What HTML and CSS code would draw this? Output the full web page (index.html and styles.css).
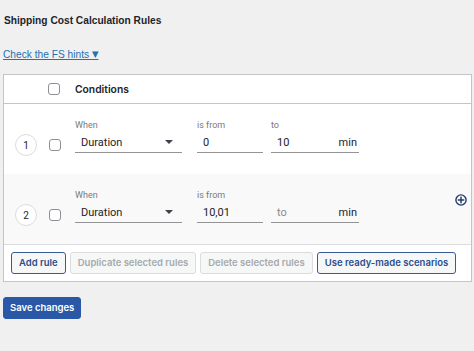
FILE: index.html
```html
<!DOCTYPE html>
<html lang="en">
<head>
<meta charset="utf-8">
<title>Shipping Cost Calculation Rules</title>
<link rel="stylesheet" href="styles.css">
</head>
<body>
<h2 class="title">Shipping Cost Calculation Rules</h2>
<a class="hint-link" href="#">Check the FS hints <span class="tri">▼</span></a>
<div class="rules">
  <div class="rules-head">
    <span class="cb"></span>
    <span class="head-label">Conditions</span>
  </div>
  <div class="rule">
    <span class="num">1</span>
    <span class="cb cb-row"></span>
    <div class="field f-when">
      <div class="f-label">When</div>
      <div class="f-input"><span>Duration</span><span class="caret"></span></div>
    </div>
    <div class="field f-from">
      <div class="f-label">is from</div>
      <div class="f-input"><span>0</span></div>
    </div>
    <div class="field f-to">
      <div class="f-label">to</div>
      <div class="f-input"><span>10</span><span class="suffix">min</span></div>
    </div>
  </div>
  <div class="rule rule-alt">
    <span class="num">2</span>
    <span class="cb cb-row"></span>
    <div class="field f-when">
      <div class="f-label">When</div>
      <div class="f-input"><span>Duration</span><span class="caret"></span></div>
    </div>
    <div class="field f-from">
      <div class="f-label">is from</div>
      <div class="f-input"><span>10,01</span></div>
    </div>
    <div class="field f-to">
      <div class="f-label">&nbsp;</div>
      <div class="f-input"><span class="placeholder">to</span><span class="suffix">min</span></div>
    </div>
    <svg class="plus" viewBox="0 0 12 12" width="12" height="12" aria-hidden="true">
      <circle cx="6" cy="6" r="5.1" fill="none" stroke="currentColor" stroke-width="1.4"/>
      <path d="M6 3.3v5.4M3.3 6h5.4" stroke="currentColor" stroke-width="1.5" stroke-linecap="round"/>
    </svg>
  </div>
  <div class="rules-foot">
    <button class="btn btn-secondary">Add rule</button>
    <button class="btn btn-disabled">Duplicate selected rules</button>
    <button class="btn btn-disabled">Delete selected rules</button>
    <button class="btn btn-secondary">Use ready-made scenarios</button>
  </div>
</div>
<button class="btn btn-primary save">Save changes</button>
</body>
</html>
```

FILE: styles.css
```css
* { box-sizing: border-box; }

body {
  margin: 0;
  padding: 12px 2px 0 3px;
  background: #f0f0f1;
  font-family: Inter, "Liberation Sans", Arial, sans-serif;
  color: #1d2327;
}

.title {
  margin: 0 0 0 1px;
  font-family: "Liberation Sans", Arial, sans-serif;
  font-size: 10.2px;
  line-height: 18px;
  font-weight: 700;
}

.hint-link {
  display: block;
  height: 18px;
  margin-top: 16px;
  font-family: "Liberation Sans", Arial, sans-serif;
  font-size: 10.2px;
  line-height: 18px;
  color: #2271b1;
  text-decoration: underline;
  width: max-content;
}

.tri {
  font-family: "DejaVu Sans", sans-serif;
  font-size: 8.5px;
  line-height: 0;
  vertical-align: 1px;
}

.rules {
  margin-top: 10px;
  border: 1px solid #c3c4c7;
  background: #fff;
}

.rules-head {
  display: flex;
  align-items: center;
  height: 29px;
  border-bottom: 1px solid #c3c4c7;
  padding-left: 44px;
}

.cb {
  display: block;
  width: 12px;
  height: 12px;
  border: 1px solid #8c8f94;
  border-radius: 3px;
  background: #fff;
  flex: none;
}

.head-label {
  margin-left: 15px;
  font-size: 10.3px;
  font-weight: 600;
}

.rule {
  display: flex;
  align-items: flex-start;
  height: 70px;
  padding: 14px 3px 0 11px;
  background: #fff;
}

.rule-alt { background: #f9f9f9; }

.num {
  width: 22px;
  height: 22px;
  margin-top: 16px;
  border: 1px solid #dcdcde;
  border-radius: 50%;
  background: #fff;
  display: flex;
  align-items: center;
  justify-content: center;
  font-family: Roboto, "Liberation Sans", sans-serif;
  font-size: 10px;
  color: #1d2327;
  flex: none;
}

.cb-row {
  margin: 21px 14px 0 12px;
}

.field {
  font-family: Roboto, "Liberation Sans", sans-serif;
  flex: none;
}

.f-when { width: 107px; margin-right: 15px; }
.f-from { width: 66px; margin-right: 8px; }
.f-to { width: 88px; }

.f-label {
  height: 14px;
  line-height: 15px;
  font-size: 9px;
  color: #7a7a7a;
}

.f-input {
  display: flex;
  align-items: center;
  height: 21px;
  padding: 0 2px 0 6px;
  border-bottom: 1px solid #949494;
  font-size: 11px;
  color: #1d2327;
}

.caret {
  margin-left: auto;
  margin-right: 7px;
  width: 0;
  height: 0;
  border-left: 4px solid transparent;
  border-right: 4px solid transparent;
  border-top: 4px solid #3c434a;
}

.suffix { margin-left: auto; }

.placeholder { color: #8a8a8a; }

.plus {
  margin: 6px 1px 0 auto;
  color: #243b6b;
  flex: none;
}

.rules-foot {
  display: flex;
  gap: 4px;
  padding: 7px 7px;
  border-top: 1px solid #dcdcde;
  background: #fff;
}

.btn {
  height: 22px;
  padding: 0 7px;
  border-radius: 3px;
  font-family: Inter, "Liberation Sans", Arial, sans-serif;
  font-size: 9.5px;
  font-weight: 600;
  line-height: 20px;
  white-space: nowrap;
  cursor: pointer;
}

.btn-secondary {
  background: #f6f7f7;
  border: 1px solid #3a5a94;
  color: #2a4f8e;
}

.btn-disabled {
  background: #f6f7f7;
  border: 1px solid #dcdcde;
  color: #a7aaad;
}

.btn-primary {
  background: #2a58a6;
  border: 1px solid #2a58a6;
  color: #fff;
}

.save {
  display: block;
  margin-top: 15px;
  padding: 0 6px;
}
```
